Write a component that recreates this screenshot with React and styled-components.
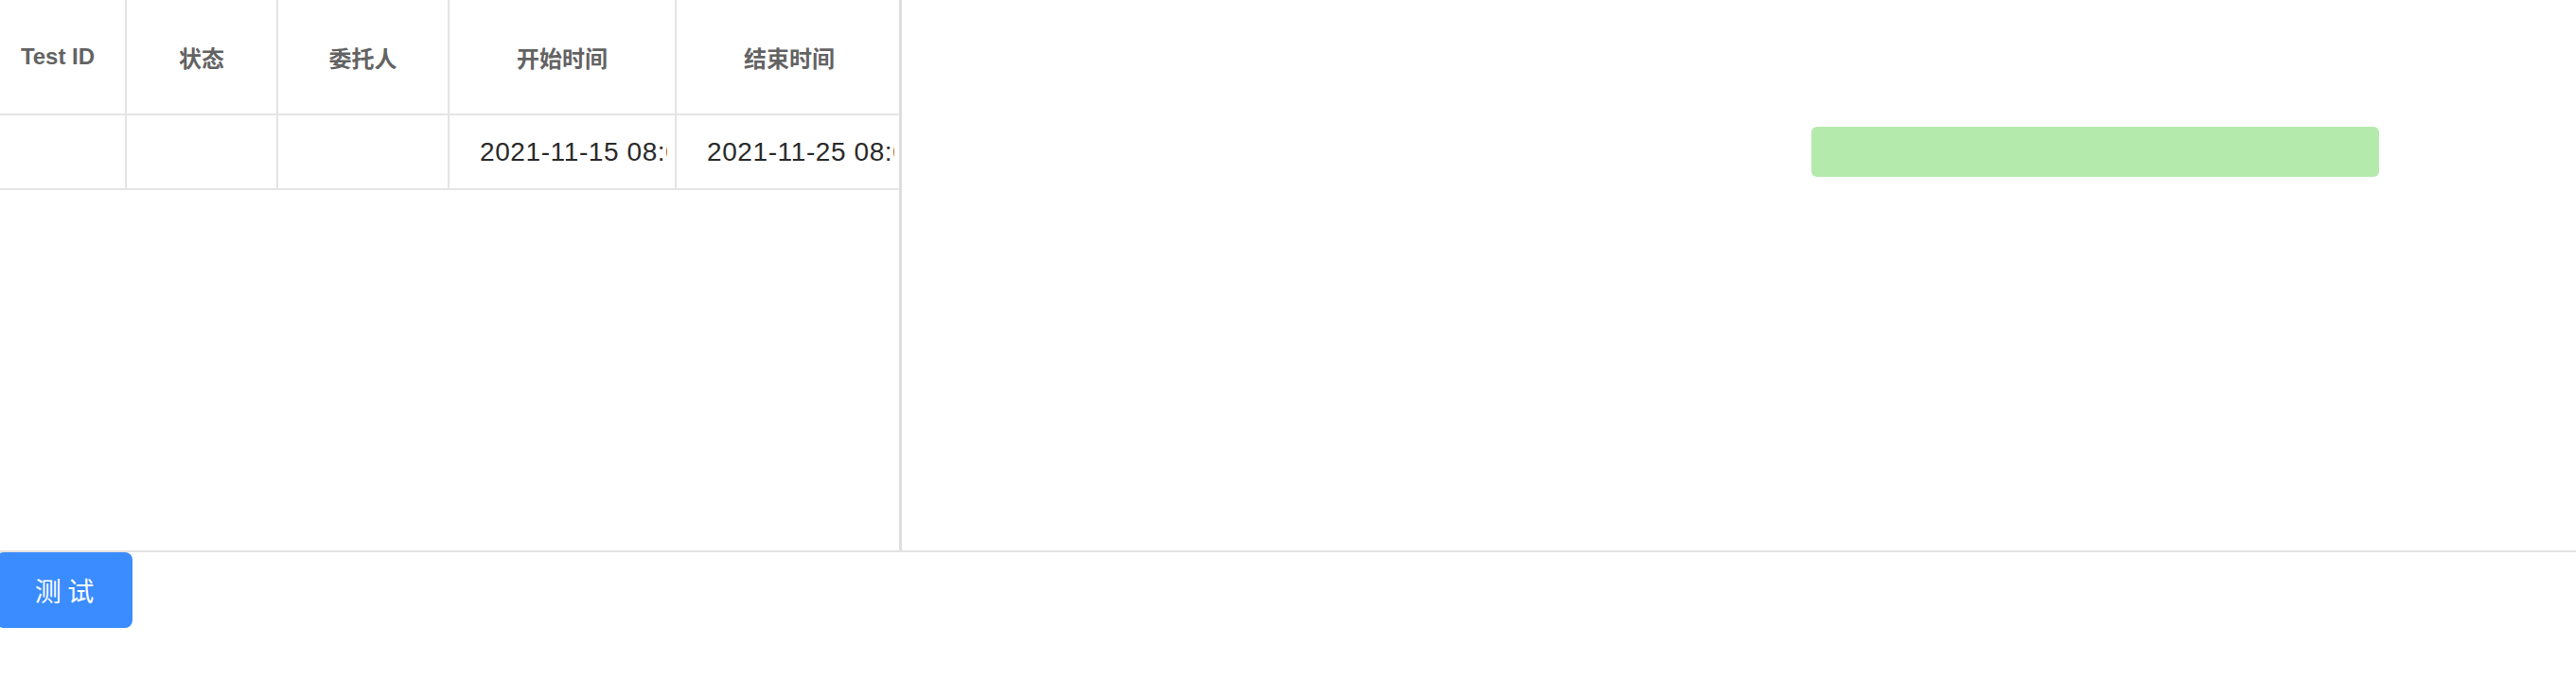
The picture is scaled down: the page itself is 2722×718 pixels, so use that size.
import React from "react";
import styled, { createGlobalStyle } from "styled-components";

const GlobalStyle = createGlobalStyle`
  html, body {
    margin: 0;
    padding: 0;
    background: #ffffff;
  }
  body {
    font-family: "Liberation Sans", "Noto Sans CJK SC", sans-serif;
    overflow: hidden;
  }
`;

const columns = [
  { key: "id", title: "Test ID", width: 144 },
  { key: "status", title: "状态", width: 160 },
  { key: "owner", title: "委托人", width: 181 },
  { key: "start", title: "开始时间", width: 240 },
  { key: "end", title: "结束时间", width: 240 },
];

const tasks = [
  { id: "", status: "", owner: "", start: "2021-11-15 08:00", end: "2021-11-25 08:00" },
];

const ORIGIN = new Date("2021-10-30T08:00:00").getTime();
const DAY = 24 * 3600 * 1000;
const PX_PER_DAY = 60;

const toDate = (s) => new Date(s.replace(" ", "T") + ":00").getTime();

const Page = styled.div`
  width: 2722px;
  height: 718px;
  background: #fff;
`;

const Gantt = styled.div`
  display: flex;
  height: 584px;
  box-sizing: border-box;
  border-bottom: 2px solid #e2e2e2;
`;

const GridPane = styled.div`
  flex: none;
  width: 950px;
  overflow: hidden;
`;

const GridTable = styled.div`
  margin-left: -10px;
  display: flex;
  flex-direction: column;
`;

const Row = styled.div`
  display: flex;
  height: ${(p) => p.$height}px;
  border-bottom: 2px solid #e4e4e4;
  width: 1200px;
`;

const HeaderCell = styled.div`
  flex: none;
  width: ${(p) => p.$width}px;
  box-sizing: border-box;
  border-right: 2px solid #e4e4e4;
  display: flex;
  align-items: center;
  justify-content: center;
  font-size: 24px;
  font-weight: 700;
  color: #636363;
  white-space: nowrap;
`;

const Cell = styled.div`
  flex: none;
  width: ${(p) => p.$width}px;
  box-sizing: border-box;
  border-right: 2px solid #e4e4e4;
  padding: 0 8px;
  display: flex;
  align-items: center;
`;

const CellText = styled.div`
  overflow: hidden;
  white-space: nowrap;
  padding-left: 24px;
  font-size: 28px;
  letter-spacing: 0.6px;
  color: #2a2a2a;
  width: 100%;
`;

const Splitter = styled.div`
  flex: none;
  width: 3px;
  background: #dedede;
`;

const Timeline = styled.div`
  flex: 1;
  display: flex;
  flex-direction: column;
`;

const TimelineHeader = styled.div`
  height: 122px;
`;

const TimelineRow = styled.div`
  position: relative;
  height: 77px;
`;

const Bar = styled.div`
  position: absolute;
  top: 12px;
  height: 53px;
  background: #b5eaad;
  border-radius: 6px;
`;

const Footer = styled.div`
  display: flex;
`;

const Button = styled.button`
  margin-left: -4px;
  width: 144px;
  height: 80px;
  border: none;
  border-radius: 8px;
  background: #3a8cff;
  color: #ffffff;
  font-family: "Noto Sans CJK SC", sans-serif;
  font-size: 28px;
  padding: 0;
  cursor: pointer;
  display: flex;
  align-items: center;
  justify-content: center;
`;

export default function App() {
  return (
    <Page>
      <GlobalStyle />
      <Gantt>
        <GridPane>
          <GridTable>
            <Row $height={120}>
              {columns.map((c) => (
                <HeaderCell key={c.key} $width={c.width}>
                  {c.title}
                </HeaderCell>
              ))}
            </Row>
            {tasks.map((t, i) => (
              <Row key={i} $height={77}>
                {columns.map((c) => (
                  <Cell key={c.key} $width={c.width}>
                    <CellText>{t[c.key]}</CellText>
                  </Cell>
                ))}
              </Row>
            ))}
          </GridTable>
        </GridPane>
        <Splitter />
        <Timeline>
          <TimelineHeader />
          {tasks.map((t, i) => {
            const s = toDate(t.start);
            const e = toDate(t.end);
            const left = Math.round(((s - ORIGIN) / DAY) * PX_PER_DAY) + 1;
            const width = Math.round(((e - s) / DAY) * PX_PER_DAY);
            return (
              <TimelineRow key={i}>
                <Bar style={{ left, width }} />
              </TimelineRow>
            );
          })}
        </Timeline>
      </Gantt>
      <Footer>
        <Button>测 试</Button>
      </Footer>
    </Page>
  );
}
